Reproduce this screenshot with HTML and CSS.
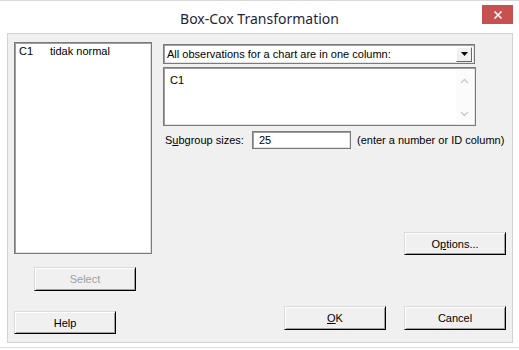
FILE: index.html
```html
<!DOCTYPE html>
<html lang="en">

<head>
    <meta charset="UTF-8">
    <title>Box-Cox Transformation</title>
    <link rel="stylesheet" href="styles.css">
</head>

<body>

    <div class="window">
        <div class="titlebar">
            <span></span>
            <div class="title">Box-Cox Transformation</div>
            <div class="close-button">
                <svg width="10" height="10" viewBox="0 0 10 10">
                    <path d="M1.5 1.5 L8.5 8.5 M8.5 1.5 L1.5 8.5" stroke="#fff" stroke-width="1.6" />
                </svg>
            </div>
        </div>

        <div class="client">
            <div class="left-col">
                <div class="listbox">
                    <div class="list-row">
                        <span class="col-id">C1</span>
                        <span>tidak normal</span>
                    </div>
                </div>
                <button type="button" class="btn btn-select" disabled>Select</button>
                <button type="button" class="btn btn-help">Help</button>
            </div>

            <div class="right-col">
                <div class="combo">
                    <span class="combo-text">All observations for a chart are in one column:</span>
                    <span class="combo-arrow">
                        <svg width="7" height="4" viewBox="0 0 7 4">
                            <path d="M0 0 H7 L3.5 4 Z" fill="#000" />
                        </svg>
                    </span>
                </div>

                <div class="varbox">
                    <div class="varbox-text">C1</div>
                    <div class="scrollbar">
                        <svg width="9" height="6" viewBox="0 0 9 6">
                            <path d="M1 5 L4.5 1.5 L8 5" fill="none" stroke="#c8c8c8" stroke-width="1.4" />
                        </svg>
                        <svg width="9" height="6" viewBox="0 0 9 6">
                            <path d="M1 1 L4.5 4.5 L8 1" fill="none" stroke="#c8c8c8" stroke-width="1.4" />
                        </svg>
                    </div>
                </div>

                <div class="subgroup-row">
                    <label for="subgroup">S<u>u</u>bgroup sizes:</label>
                    <div class="field" id="subgroup">25</div>
                    <span class="hint">(enter a number or ID column)</span>
                </div>

                <button type="button" class="btn btn-options">O<u>p</u>tions...</button>

                <div class="action-row">
                    <button type="button" class="btn"><u>O</u>K</button>
                    <button type="button" class="btn">Cancel</button>
                </div>
            </div>
        </div>

        <div class="bottom-strip"></div>
    </div>

</body>

</html>
```

FILE: styles.css
```css
body {
    margin: 0;
    background-color: #ffffff;
    font-family: "Liberation Sans", Arial, sans-serif;
    font-size: 11px;
    color: #000;
}

.window {
    width: 519px;
    height: 350px;
    background-color: #ffffff;
    border-top: 1px solid #d9d9d9;
    box-sizing: border-box;
    overflow: hidden;
}

.titlebar {
    display: grid;
    grid-template-columns: 1fr auto 1fr;
    height: 32px;
}

.title {
    align-self: center;
    padding-top: 3px;
    font-family: "Noto Sans", "Open Sans", sans-serif;
    font-size: 14px;
    color: #1f1f3a;
}

.close-button {
    justify-self: end;
    align-self: start;
    margin-top: 4px;
    margin-right: 6px;
    width: 31px;
    height: 19px;
    background-color: #c75050;
    display: flex;
    align-items: center;
    justify-content: center;
}

.client {
    display: flex;
    margin-left: 7px;
    width: 506px;
    height: 310px;
    box-sizing: border-box;
    border: 1px solid #d2d2d2;
    background-color: #f0f0f0;
    padding: 8px 5px 0 6px;
}

.left-col {
    display: flex;
    flex-direction: column;
    width: 138px;
}

.right-col {
    display: flex;
    flex-direction: column;
    margin-left: 11px;
    width: 343px;
}

/* sunken boxes */
.listbox,
.varbox,
.field,
.combo {
    background-color: #ffffff;
    border: 1px solid #7a7a7a;
    box-shadow: inset 1px 1px 0 #a0a0a0, inset -1px -1px 0 #e3e3e3;
    box-sizing: border-box;
}

.listbox {
    height: 212px;
    padding: 2px 4px;
}

.list-row {
    display: flex;
    line-height: 13px;
}

.col-id {
    width: 31px;
}

.combo {
    display: flex;
    align-items: center;
    margin-top: 2px;
    width: 312px;
    height: 20px;
    padding: 0 2px 0 3px;
}

.combo-text {
    flex: 1;
}

.combo-arrow {
    width: 16px;
    height: 15px;
    box-sizing: border-box;
    display: flex;
    align-items: center;
    justify-content: center;
    background-color: #f0f0f0;
    border-top: 1px solid #fff;
    border-left: 1px solid #fff;
    border-right: 1px solid #696969;
    border-bottom: 1px solid #696969;
}

.varbox {
    display: flex;
    margin-top: 3px;
    width: 313px;
    height: 59px;
}

.varbox-text {
    flex: 1;
    padding: 6px 6px;
    line-height: 13px;
}

.scrollbar {
    width: 17px;
    margin: 2px 2px 2px 0;
    background-color: #fbfbfb;
    display: flex;
    flex-direction: column;
    justify-content: space-between;
    align-items: center;
    padding: 8px 0 6px;
}

.subgroup-row {
    display: flex;
    align-items: center;
    margin-top: 5px;
    height: 18px;
}

.subgroup-row label {
    margin-left: 2px;
    width: 87px;
}

.field {
    width: 99px;
    height: 18px;
    padding: 2px 6px;
    line-height: 13px;
}

.hint {
    margin-left: 6px;
}

.btn {
    width: 102px;
    height: 23px;
    padding: 0;
    font-family: "Liberation Sans", Arial, sans-serif;
    font-size: 11px;
    color: #000;
    background-color: #f0f0f0;
    border-top: 1px solid #dadada;
    border-left: 1px solid #dadada;
    border-right: 1px solid #000;
    border-bottom: 1px solid #000;
    box-shadow: inset 1px 1px 0 #fff, inset -1px -1px 0 #a0a0a0;
    box-sizing: border-box;
}

.btn-select {
    margin-top: 13px;
    margin-left: 20px;
    height: 24px;
    color: #a0a0a0;
}

.btn-help {
    margin-top: 20px;
}

.btn-options {
    align-self: flex-end;
    margin-top: 83px;
}

.action-row {
    display: flex;
    justify-content: flex-end;
    gap: 18px;
    margin-top: 51px;
}

.action-row .btn {
    height: 24px;
}

.bottom-strip {
    margin-top: 4px;
    border-top: 1px solid #dcdcdc;
}
```
